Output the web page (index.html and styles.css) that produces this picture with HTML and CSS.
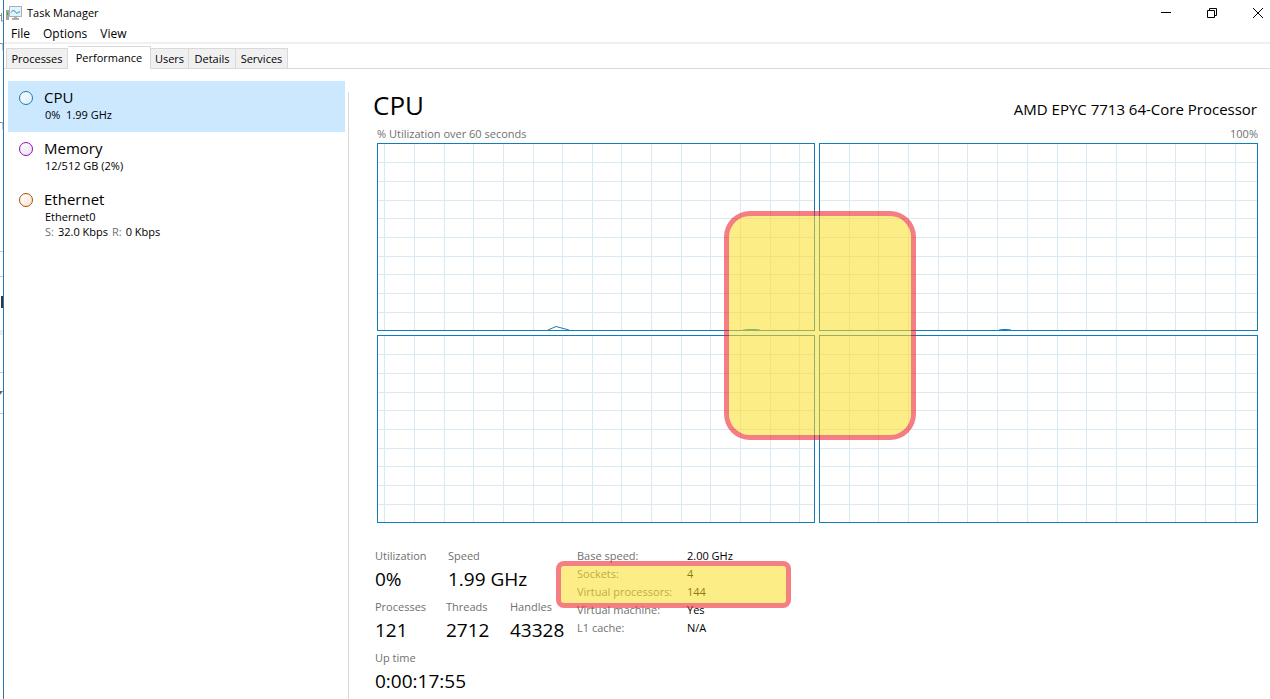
FILE: index.html
```html
<!DOCTYPE html>
<html lang="en">
<head>
<meta charset="utf-8">
<title>Task Manager</title>
<link rel="stylesheet" href="styles.css">
</head>
<body>
<div class="screen">
  <div class="behind" aria-hidden="true">
    <svg width="4" height="420" viewBox="0 0 4 420">
      <path d="M0 15.500h2M1.500 13v8h2M0 43.500h2q1 0 1 2v5M0 122.500h2q1 0 1 2v5" fill="none" stroke="#8a8a8a"/>
      <path d="M0 251.500h3M0 276.500h3M0 372.500h3M0 413.500h3" stroke="#c8c8c8"/>
      <path d="M0 330h3v5H0z" fill="#ececec"/>
      <path d="M1 296h3v12H1z" fill="#2b3a45"/>
      <path d="M0 391h3l-3 4z" fill="#666"/>
    </svg>
  </div>
  <div class="window">
    <header class="titlebar">
      <svg class="app-icon" width="16" height="16" viewBox="0 0 16 16">
        <path d="M0 5h3v10H0z" fill="#a2a4a5"/><path d="M1 7h1v3H1z" fill="#2fb52f"/>
        <path d="M3.500 1.500h12v10h-12z" fill="#e2f5fd" stroke="#a9aeb1"/>
        <path d="M5 7.500l2.500-2.500L11 8.500l1.500-1.500H14" fill="none" stroke="#1b87c8"/>
        <path d="M8 12h3v1h2v2H6v-2h2z" fill="#a9aeb1"/>
      </svg>
      <h1 class="title">Task Manager</h1>
      <div class="controls">
        <button class="control" aria-label="Minimize"><svg width="12" height="12" viewBox="0 0 12 12"><path d="M1 5.500h10"/></svg></button>
        <button class="control" aria-label="Restore"><svg width="12" height="12" viewBox="0 0 12 12"><path d="M1.500 3.500h7v7h-7zM3.500 3V1.500h7v7H9"/></svg></button>
        <button class="control" aria-label="Close"><svg width="12" height="12" viewBox="0 0 12 12"><path d="M1 1l10 10M11 1L1 11"/></svg></button>
      </div>
    </header>
    <nav class="menu">
      <button class="menu-item">File</button>
      <button class="menu-item">Options</button>
      <button class="menu-item">View</button>
    </nav>
    <div class="tabs" role="tablist">
      <button class="tab tab-processes" role="tab">Processes</button>
      <button class="tab tab-active" role="tab" aria-selected="true">Performance</button>
      <button class="tab tab-users" role="tab">Users</button>
      <button class="tab tab-details" role="tab">Details</button>
      <button class="tab tab-services" role="tab">Services</button>
    </div>
    <div class="content">
      <aside class="sidebar">
        <button class="resource resource-active">
          <span class="dot dot-cpu"></span>
          <span class="resource-text"><span class="resource-name">CPU</span><span class="resource-line">0%&nbsp; 1.99 GHz</span></span>
        </button>
        <button class="resource">
          <span class="dot dot-memory"></span>
          <span class="resource-text"><span class="resource-name">Memory</span><span class="resource-line">12/512 GB (2%)</span></span>
        </button>
        <button class="resource">
          <span class="dot dot-ethernet"></span>
          <span class="resource-text"><span class="resource-name">Ethernet</span><span class="resource-line">Ethernet0</span><span class="resource-line resource-rates"><span class="muted">S:</span><span>32.0 Kbps</span><span class="muted">R:</span><span>0 Kbps</span></span></span>
        </button>
      </aside>
      <main class="detail">
        <div class="heading">
          <h2 class="heading-name">CPU</h2>
          <span class="heading-model">AMD EPYC 7713 64-Core Processor</span>
        </div>
        <div class="axis"><span>% Utilization over 60 seconds</span><span>100%</span></div>
        <div class="graphs">
          <svg class="graph" viewBox="0 0 436 186" preserveAspectRatio="none">
            <path class="grid-lines" d="M6.500 0v186M36.500 0v186M66.500 0v186M95.500 0v186M125.500 0v186M155.500 0v186M184.500 0v186M214.500 0v186M243.500 0v186M273.500 0v186M303.500 0v186M332.500 0v186M362.500 0v186M392.500 0v186M421.500 0v186M0 18.500h436M0 37.500h436M0 56.500h436M0 74.500h436M0 93.500h436M0 112.500h436M0 130.500h436M0 149.500h436M0 168.500h436"/>
            <path class="usage" d="M170 186l8-3.500 13 3.500M365 186l5-.5h7l5 .5"/>
          </svg>
          <svg class="graph" viewBox="0 0 437 186" preserveAspectRatio="none">
            <path class="grid-lines" d="M29.500 0v186M58.500 0v186M88.500 0v186M118.500 0v186M147.500 0v186M177.500 0v186M207.500 0v186M237.500 0v186M266.500 0v186M296.500 0v186M326.500 0v186M355.500 0v186M385.500 0v186M415.500 0v186M0 18.500h437M0 37.500h437M0 56.500h437M0 74.500h437M0 93.500h437M0 112.500h437M0 130.500h437M0 149.500h437M0 168.500h437"/>
            <path class="usage" d="M179 186l4-.5h4l4 .5"/>
          </svg>
          <svg class="graph" viewBox="0 0 436 186" preserveAspectRatio="none">
            <path class="grid-lines" d="M6.500 0v186M36.500 0v186M66.500 0v186M95.500 0v186M125.500 0v186M155.500 0v186M184.500 0v186M214.500 0v186M243.500 0v186M273.500 0v186M303.500 0v186M332.500 0v186M362.500 0v186M392.500 0v186M421.500 0v186M0 18.500h436M0 37.500h436M0 56.500h436M0 74.500h436M0 93.500h436M0 112.500h436M0 130.500h436M0 149.500h436M0 168.500h436"/>
          </svg>
          <svg class="graph" viewBox="0 0 437 186" preserveAspectRatio="none">
            <path class="grid-lines" d="M29.500 0v186M58.500 0v186M88.500 0v186M118.500 0v186M147.500 0v186M177.500 0v186M207.500 0v186M237.500 0v186M266.500 0v186M296.500 0v186M326.500 0v186M355.500 0v186M385.500 0v186M415.500 0v186M0 18.500h437M0 37.500h437M0 56.500h437M0 74.500h437M0 93.500h437M0 112.500h437M0 130.500h437M0 149.500h437M0 168.500h437"/>
          </svg>
          <div class="mark mark-graphs"></div>
        </div>
        <div class="stats">
          <div class="counters">
            <dl class="counter-row">
              <div class="counter counter-utilization"><dt>Utilization</dt><dd>0%</dd></div>
              <div class="counter"><dt>Speed</dt><dd>1.99 GHz</dd></div>
            </dl>
            <dl class="counter-row">
              <div class="counter counter-processes"><dt>Processes</dt><dd>121</dd></div>
              <div class="counter counter-threads"><dt>Threads</dt><dd>2712</dd></div>
              <div class="counter"><dt>Handles</dt><dd>43328</dd></div>
            </dl>
            <dl class="counter-row">
              <div class="counter"><dt>Up time</dt><dd>0:00:17:55</dd></div>
            </dl>
          </div>
          <div class="facts">
            <table class="facts-table">
              <tr><th scope="row">Base speed:</th><td>2.00 GHz</td></tr>
              <tr><th scope="row">Sockets:</th><td>4</td></tr>
              <tr><th scope="row">Virtual processors:</th><td>144</td></tr>
              <tr><th scope="row">Virtual machine:</th><td>Yes</td></tr>
              <tr><th scope="row">L1 cache:</th><td>N/A</td></tr>
            </table>
            <div class="mark mark-facts"></div>
          </div>
        </div>
      </main>
    </div>
  </div>
</div>
</body>
</html>
```
FILE: styles.css
```css
* { box-sizing: border-box; }
body {
  margin: 0;
  background: #fff;
  color: #000;
  font: 11px/16px "Open Sans", "Noto Sans", sans-serif;
}
button {
  margin: 0;
  padding: 0;
  border: 0;
  background: none;
  color: inherit;
  font: inherit;
}
svg { display: block; }
h1, h2, dl, dd { margin: 0; font-weight: 400; }

.screen { display: flex; min-height: 100vh; overflow: hidden; }
.behind { flex: none; width: 3px; overflow: hidden; }
.window {
  flex: 1;
  min-width: 0;
  display: flex;
  flex-direction: column;
  border-left: 1px solid #2a78ae;
}

.titlebar { display: flex; align-items: center; height: 25px; padding-left: 2px; }
.title { margin-left: 5px; font-size: 11px; line-height: 16px; }
.controls { display: flex; margin-left: auto; margin-right: -11px; }
.control { display: grid; place-items: center; width: 46px; height: 22px; }
.control path { fill: none; stroke: #000; }

.menu { display: flex; gap: 14px; height: 19px; padding-left: 7px; border-bottom: 2px solid #f0f0f0; }
.menu-item { font-size: 12px; line-height: 18px; }
.menu { gap: 13px; }

.tabs { display: flex; align-items: flex-end; height: 25px; padding-left: 2px; border-bottom: 1px solid #d9d9d9; }
.tab { height: 20px; border: 1px solid #d9d9d9; border-width: 1px 1px 0 0; background: #f0f0f0; white-space: nowrap; }
.tab-processes { width: 62px; border-left-width: 1px; }
.tab-active { width: 83px; height: 23px; margin-bottom: -1px; background: #fff; }
.tab-users { width: 38px; }
.tab-details { width: 47px; }
.tab-services { width: 52px; }

.content { flex: 1; display: flex; }
.sidebar { flex: none; width: 341px; padding: 12px 0 0 4px; }
.resource { display: flex; align-items: flex-start; width: 100%; min-height: 51px; padding: 7px 0 0 11px; text-align: left; }
.resource-active { background: #cce8ff; }
.dot { flex: none; width: 14px; height: 14px; margin-top: 3px; border: 1px solid; border-radius: 50%; }
.dot-cpu { border-color: #117dbb; background: linear-gradient(135deg, #fff, #dcebf5); }
.dot-memory { border-color: #8b12ae; background: linear-gradient(135deg, #fff, #f0dcf6); }
.dot-ethernet { border-color: #a74f01; background: linear-gradient(135deg, #fff, #fbe3d0); }
.resource-text { display: flex; flex-direction: column; margin-left: 11px; }
.resource-name { font-size: 15px; line-height: 19px; }
.resource-line { padding-left: 1px; line-height: 15px; }
.resource-rates { display: flex; gap: 4px; }
.muted, .axis, dt, th { color: #707070; }

.detail { flex: 1; min-width: 0; margin: 23px 0 0 3px; padding: 0 12px 0 28px; border-left: 1px solid #d9d9d9; }
.heading { display: flex; justify-content: space-between; align-items: flex-end; height: 34px; padding: 0 1px 2px 0; }
.heading-name { margin-left: -4px; font-size: 26px; line-height: 38px; }
.heading-model { font-size: 15px; line-height: 30px; }
.axis { display: flex; justify-content: space-between; height: 17px; }

.graphs { position: relative; display: grid; grid-template-columns: 438fr 439fr; grid-auto-rows: 188px; gap: 4px; }
.graph { width: 100%; height: 100%; border: 1px solid #117dbb; }
.graph path { fill: none; vector-effect: non-scaling-stroke; }
.grid-lines { stroke: #d9eaf4; shape-rendering: crispEdges; }
.usage { stroke: #117dbb; }

.mark { position: absolute; background: rgba(251, 222, 36, 0.55); background-clip: padding-box; border: 5px solid rgba(236, 28, 36, 0.57); }
.mark-graphs { top: 68px; left: calc(50% - 94px); width: 192px; height: 229px; border-radius: 26px; }
.mark-facts { top: 14px; left: -21px; width: 235px; height: 47px; border-radius: 8px; }

.stats { display: flex; margin-top: 25px; }
.counters { flex: none; width: 200px; margin-left: -2px; }
.counter-row { display: flex; height: 51px; }
.counter { white-space: nowrap; }
.counter dd { font-size: 19px; line-height: 30px; }
.counter-utilization { width: 73px; }
.counter-processes { width: 71px; }
.counter-threads { width: 64px; }
.facts { position: relative; margin: -1px 0 0 2px; }
.facts-table { border-collapse: collapse; }
.facts-table th, .facts-table td { padding: 0; font-weight: 400; line-height: 18px; text-align: left; white-space: nowrap; }
.facts-table th { width: 110px; }
```
